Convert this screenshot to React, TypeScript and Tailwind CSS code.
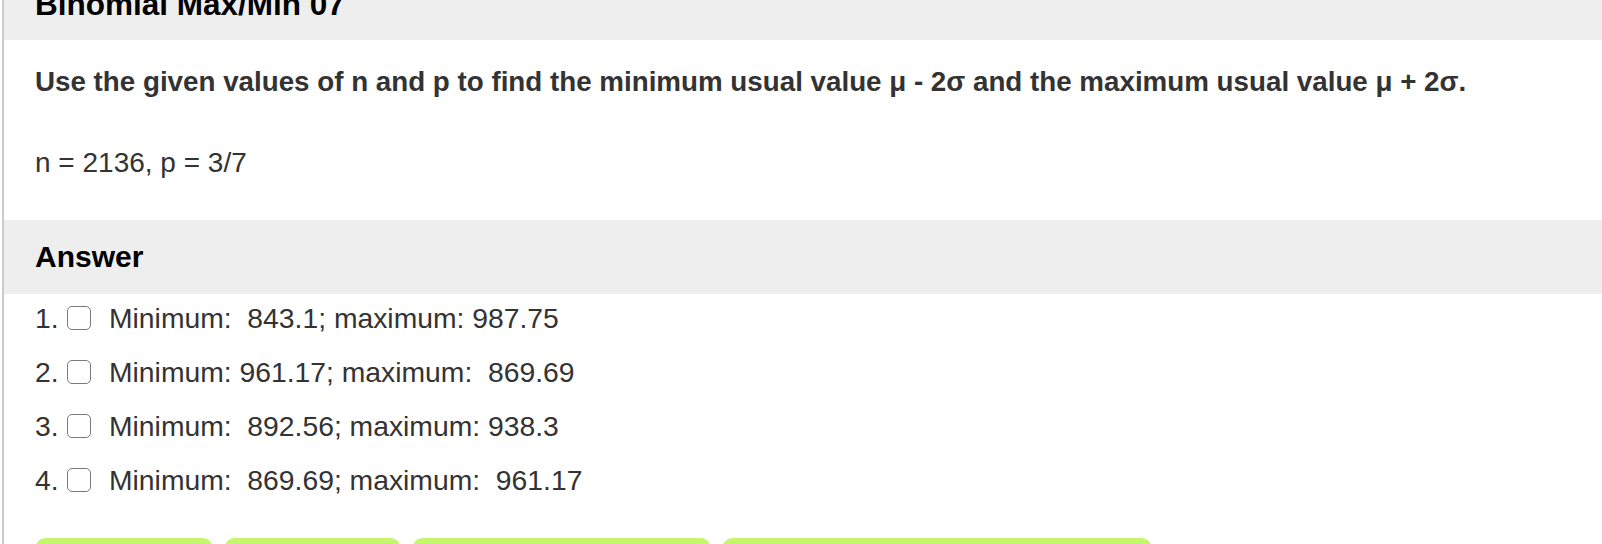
import React from "react"

const OPTIONS = [
  "Minimum:\u00a0 843.1; maximum: 987.75",
  "Minimum: 961.17; maximum:\u00a0 869.69",
  "Minimum:\u00a0 892.56; maximum: 938.3",
  "Minimum:\u00a0 869.69; maximum:\u00a0 961.17",
]

const BUTTONS = ["w-[176px]", "w-[175px]", "w-[297px]", "w-[428px]"]

export default function App() {
  return (
    <div
      className="h-[544px] w-full overflow-hidden bg-white"
      style={{ fontFamily: '"Liberation Sans", Arial, Helvetica, sans-serif' }}
    >
      <div className="ml-[2px] h-full border-l-2 border-[#cbcbcb]">
        {/* title bar, scrolled so the heading is half cut off */}
        <div className="h-[40px] overflow-hidden bg-[#eeeeee] pl-[31px]">
          <h2 className="-mt-[14px] text-[31.5px] font-bold leading-[36px] text-black">
            Binomial Max/Min 07
          </h2>
        </div>

        <div className="pl-[31px] text-[#333333]">
          <p className="pt-[26px] text-[27.75px] font-bold leading-[32px]">
            Use the given values of n and p to find the minimum usual value μ - 2σ and the maximum usual value μ + 2σ.
          </p>
          <p className="mt-[49px] text-[28px] leading-[32px]">n = 2136, p = 3/7</p>
        </div>

        <div className="mt-[41px] flex h-[74px] items-center bg-[#eeeeee] pl-[31px]">
          <h3 className="text-[30px] font-bold leading-[34px] text-black">Answer</h3>
        </div>

        <ol className="flex flex-col gap-[14px] pl-[31px] pt-[4px] text-[#333333]">
          {OPTIONS.map((o, i) => (
            <li key={i} className="flex h-[40px] items-center text-[28.3px] leading-[32px]">
              <span className="w-[25px]">{i + 1}.</span>
              <span className="ml-[7px] h-[24px] w-[24px] shrink-0 rounded-[5px] border-[1.5px] border-[#7a7a7a] bg-white" />
              <span className="ml-[18px] whitespace-pre">{o}</span>
            </li>
          ))}
        </ol>

        <div className="mt-[38px] flex gap-[13px] pl-[32px]">
          {BUTTONS.map((w, i) => (
            <button key={i} className={`${w} h-[44px] rounded-[9px] bg-[#c6f66e]`} />
          ))}
        </div>
      </div>
    </div>
  )
}
